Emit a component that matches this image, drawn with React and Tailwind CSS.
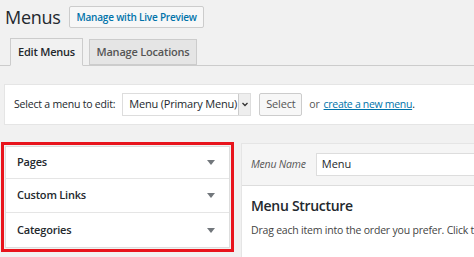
import React from "react";

const Arrow = () => (
  <svg width="8" height="5" viewBox="0 0 8 5" className="block">
    <path d="M0 0 L8 0 L4 5 Z" fill="#72777c" />
  </svg>
);

export default function App() {
  const font = { fontFamily: '"Open Sans", "Noto Sans", sans-serif' };
  return (
    <div
      className="w-[474px] h-[257px] bg-[#f1f1f1] overflow-hidden text-[#23282d]"
      style={font}
    >
      {/* Header */}
      <div className="flex items-center pl-[5px] pt-[6px] h-[28px]">
        <h1 className="text-[18px] leading-none font-normal tracking-[-0.3px] text-[#23282d]">
          Menus
        </h1>
        <div className="ml-[9px] h-[22px] px-[6px] flex items-center border border-[#ccc] bg-[#f7f7f7] rounded-[2px] text-[10px] font-semibold text-[#0073aa] tracking-[-0.2px]">
          Manage with Live Preview
        </div>
      </div>

      {/* Tabs */}
      <div className="mt-[10px] pl-[10px] flex items-end gap-[6px] border-b border-[#ccc] h-[28px]">
        <div className="h-[28px] -mb-px w-[73px] flex items-center justify-center border border-[#ccc] border-b-[#f1f1f1] bg-[#f1f1f1] text-[11px] font-semibold tracking-[-0.2px]">
          Edit Menus
        </div>
        <div className="h-[26px] w-[108px] flex items-center justify-center border border-[#ccc] bg-[#e5e5e5] text-[11px] font-semibold text-[#555] tracking-[-0.2px]">
          Manage Locations
        </div>
      </div>

      {/* Select bar */}
      <div className="mt-[18px] ml-[4px] h-[41px] bg-white border border-[#e5e5e5] border-r-0 flex items-center pl-[9px] text-[10.5px] tracking-[-0.2px]">
        <span>Select a menu to edit:</span>
        <div className="ml-[7px] h-[23px] flex items-stretch border border-[#ddd] bg-white">
          <div className="w-[115px] flex items-center pl-[6px] text-[11px]">Menu (Primary Menu)</div>
          <div className="w-[12px] flex items-center justify-center border-l border-[#ccc] bg-[#eee]">
            <svg width="6" height="5" viewBox="0 0 6 5">
              <path d="M0.5 1 L3 3.5 L5.5 1" stroke="#333" strokeWidth="1.3" fill="none" />
            </svg>
          </div>
        </div>
        <div className="ml-[8px] h-[23px] w-[43px] flex items-center justify-center border border-[#ccc] bg-[#f7f7f7] rounded-[2px] text-[11px] text-[#555]">
          Select
        </div>
        <span className="ml-[7px] text-[#555]">or</span>
        <span className="ml-[4px] text-[#0073aa] underline tracking-[-0.3px]">create a new menu</span>
        <span>.</span>
      </div>

      {/* Bottom */}
      <div className="mt-[17px] flex items-start">
        <div className="shrink-0 ml-[1px] w-[233px] h-[110px] border-[3px] border-[#e8141c] p-[1px]">
          <div className="bg-white border border-[#ddd] h-full flex flex-col text-[11px] font-semibold tracking-[-0.2px]">
            <div className="h-[32px] flex items-center justify-between pl-[11px] pr-[14px] border-b border-[#e5e5e5]">
              <span>Pages</span>
              <Arrow />
            </div>
            <div className="h-[34px] flex items-center justify-between pl-[11px] pr-[14px] border-b border-[#e5e5e5]">
              <span>Custom Links</span>
              <Arrow />
            </div>
            <div className="flex-1 flex items-center justify-between pl-[11px] pr-[14px]">
              <span>Categories</span>
              <Arrow />
            </div>
          </div>
        </div>

        <div className="ml-[7px] min-w-0 flex-1 h-[120px] bg-white border border-[#e5e5e5] border-r-0 mt-[1px] overflow-hidden">
          <div className="h-[42px] bg-[#f5f5f5] border-b border-[#ddd] flex items-center pl-[9px]">
            <span className="italic text-[10.5px] text-[#555] tracking-[-0.2px]">Menu Name</span>
            <div className="ml-[10px] flex-1 h-[23px] bg-white border border-[#ddd] border-r-0 flex items-center pl-[5px] text-[11px]">
              Menu
            </div>
          </div>
          <div className="pl-[9px] pt-[13px]">
            <div className="text-[14px] font-semibold tracking-[-0.3px] leading-none">Menu Structure</div>
            <div className="mt-[10px] text-[10.5px] text-[#444] tracking-[-0.2px] whitespace-nowrap">
              Drag each item into the order you prefer. Click the arrow
            </div>
          </div>
        </div>
      </div>
    </div>
  );
}
